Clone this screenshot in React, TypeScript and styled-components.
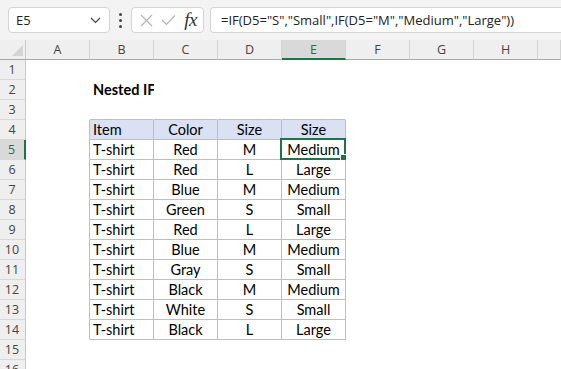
import React from "react";
import styled, { createGlobalStyle, css } from "styled-components";

const Global = createGlobalStyle`
  html, body { margin: 0; padding: 0; background: #ffffff; overflow: hidden; }
  * { box-sizing: border-box; }
`;

const UI_FONT = `"Open Sans", "Noto Sans", sans-serif`;
const CELL_FONT = `Lato, "Noto Sans", sans-serif`;
const GREEN = "#217346";
const TABLE_LINE = "#bfbfbf";

const Page = styled.div`
  width: 561px;
  height: 369px;
  overflow: hidden;
  display: flex;
  flex-direction: column;
  background: #fff;
`;

const FormulaBar = styled.div`
  height: 40px;
  flex: none;
  background: #f3f3f3;
  display: flex;
  align-items: center;
  padding-left: 8px;
  font-family: ${UI_FONT};
`;

const Box = styled.div`
  height: 26px;
  background: #fff;
  border: 1px solid #d4d4d4;
  border-radius: 4px;
  display: flex;
  align-items: center;
`;

const NameBox = styled(Box)`
  width: 102px;
  padding: 0 8px 0 7px;
  justify-content: space-between;
  font-size: 13px;
  color: #222;
`;

const Dots = styled.div`
  width: 21px;
  display: flex;
  flex-direction: column;
  align-items: center;
  gap: 3px;
  span {
    width: 3px;
    height: 3px;
    border-radius: 50%;
    background: #444;
  }
`;

const FnBox = styled(Box)`
  width: 73px;
  padding: 0 6px 0 8px;
  justify-content: space-between;
`;

const Fx = styled.span`
  font-family: "Liberation Serif", "DejaVu Serif", serif;
  font-style: italic;
  font-size: 19px;
  color: #333;
  letter-spacing: -0.5px;
  line-height: 1;
  margin-top: -2px;
`;

const FormulaInput = styled(Box)`
  flex: 1;
  margin-left: 6px;
  border-right: none;
  border-radius: 4px 0 0 4px;
  padding-left: 10px;
  font-size: 13px;
  color: #222;
  white-space: nowrap;
  overflow: hidden;
`;

const Sheet = styled.div`
  display: grid;
  grid-template-columns: 26px repeat(8, 64px) 1fr;
  grid-auto-rows: 20px;
`;

const Corner = styled.div`
  background: #efefef;
  border-right: 1px solid #c8c8c8;
  border-bottom: 1px solid #a8a8a8;
  display: flex;
  align-items: flex-end;
  justify-content: flex-end;
  padding: 0 2px 3px 0;
`;

const ColHeader = styled.div<{ $active?: boolean }>`
  background: ${(p) => (p.$active ? "#d9d9d9" : "#efefef")};
  border-right: 1px solid #d4d4d4;
  border-bottom: 1px solid #a8a8a8;
  font-family: ${UI_FONT};
  font-size: 12.5px;
  color: ${(p) => (p.$active ? GREEN : "#444")};
  display: flex;
  align-items: center;
  justify-content: center;
  ${(p) =>
    p.$active &&
    css`
      border-bottom: 2px solid ${GREEN};
    `}
`;

const RowHeader = styled.div<{ $active?: boolean }>`
  background: ${(p) => (p.$active ? "#d9d9d9" : "#efefef")};
  border-right: 1px solid #c8c8c8;
  border-bottom: 1px solid #d8d8d8;
  font-family: ${UI_FONT};
  font-size: 12.5px;
  color: ${(p) => (p.$active ? GREEN : "#444")};
  display: flex;
  align-items: center;
  justify-content: center;
  padding-right: 1px;
  ${(p) =>
    p.$active &&
    css`
      border-right: 2px solid ${GREEN};
    `}
`;

const Cell = styled.div<{
  $br?: boolean;
  $bb?: boolean;
  $align?: "left" | "center";
  $bold?: boolean;
  $fill?: string;
}>`
  position: relative;
  background: ${(p) => p.$fill ?? "#fff"};
  border-right: 1px solid ${(p) => (p.$br ? TABLE_LINE : "transparent")};
  border-bottom: 1px solid ${(p) => (p.$bb ? TABLE_LINE : "transparent")};
  font-family: ${CELL_FONT};
  font-size: 14.5px;
  font-weight: ${(p) => (p.$bold ? 700 : 400)};
  color: #000;
  line-height: 19px;
  text-align: ${(p) => p.$align ?? "left"};
  padding: 0 3px;
  white-space: nowrap;
`;

const Selection = styled.div`
  position: absolute;
  left: -2px;
  top: -2px;
  right: -1px;
  bottom: -1px;
  border: 2px solid ${GREEN};
  pointer-events: none;
  &::after {
    content: "";
    position: absolute;
    right: -5px;
    bottom: -5px;
    width: 7px;
    height: 7px;
    background: ${GREEN};
    border: 1px solid #fff;
  }
`;

const cols = ["A", "B", "C", "D", "E", "F", "G", "H", ""];

const data: string[][] = [
  ["T-shirt", "Red", "M", "Medium"],
  ["T-shirt", "Red", "L", "Large"],
  ["T-shirt", "Blue", "M", "Medium"],
  ["T-shirt", "Green", "S", "Small"],
  ["T-shirt", "Red", "L", "Large"],
  ["T-shirt", "Blue", "M", "Medium"],
  ["T-shirt", "Gray", "S", "Small"],
  ["T-shirt", "Black", "M", "Medium"],
  ["T-shirt", "White", "S", "Small"],
  ["T-shirt", "Black", "L", "Large"],
];
const headers = ["Item", "Color", "Size", "Size"];

function cellFor(row: number, col: number) {
  // col: 0=A ... 8=I
  const inTableCol = col >= 1 && col <= 4;
  const inTableRow = row >= 4 && row <= 14;
  let text = "";
  let bold = false;
  let fill: string | undefined;
  let align: "left" | "center" = "left";
  let br = false;
  let bb = false;
  if (row === 2 && col === 1) {
    text = "Nested IF";
    bold = true;
  }
  if (inTableRow && inTableCol) {
    br = true;
    bb = true;
    align = col === 1 ? "left" : "center";
    if (row === 4) {
      text = headers[col - 1];
      fill = "#d9e1f2";
    } else {
      text = data[row - 5][col - 1];
    }
  }
  if (inTableRow && col === 0) br = true;
  if (row === 3 && inTableCol) bb = true;
  return { text, bold, fill, align, br, bb };
}

export default function App() {
  const rows = Array.from({ length: 16 }, (_, i) => i + 1);
  return (
    <Page>
      <Global />
      <FormulaBar>
        <NameBox>
          <span>E5</span>
          <svg width="11" height="7" viewBox="0 0 11 7">
            <polyline points="1,1 5.5,5.5 10,1" fill="none" stroke="#444" strokeWidth="1.2" />
          </svg>
        </NameBox>
        <Dots>
          <span />
          <span />
          <span />
        </Dots>
        <FnBox>
          <svg width="13" height="13" viewBox="0 0 13 13">
            <path d="M1 1 L12 12 M12 1 L1 12" stroke="#b3b3b3" strokeWidth="1.1" fill="none" />
          </svg>
          <svg width="15" height="12" viewBox="0 0 15 12">
            <polyline points="1,6 5.5,10.5 14,1.5" stroke="#b3b3b3" strokeWidth="1.1" fill="none" />
          </svg>
          <Fx>fx</Fx>
        </FnBox>
        <FormulaInput>=IF(D5="S","Small",IF(D5="M","Medium","Large"))</FormulaInput>
      </FormulaBar>
      <Sheet>
        <Corner>
          <svg width="11" height="11" viewBox="0 0 11 11">
            <polygon points="11,0 11,11 0,11" fill="#d4d4d4" />
          </svg>
        </Corner>
        {cols.map((c, i) => (
          <ColHeader key={i} $active={c === "E"}>
            {c}
          </ColHeader>
        ))}
        {rows.map((r) => (
          <React.Fragment key={r}>
            <RowHeader $active={r === 5}>{r}</RowHeader>
            {cols.map((_, ci) => {
              const c = cellFor(r, ci);
              return (
                <Cell
                  key={ci}
                  $br={c.br}
                  $bb={c.bb}
                  $align={c.align}
                  $bold={c.bold}
                  $fill={c.fill}
                >
                  {c.text}
                  {r === 5 && ci === 4 && <Selection />}
                </Cell>
              );
            })}
          </React.Fragment>
        ))}
      </Sheet>
    </Page>
  );
}
